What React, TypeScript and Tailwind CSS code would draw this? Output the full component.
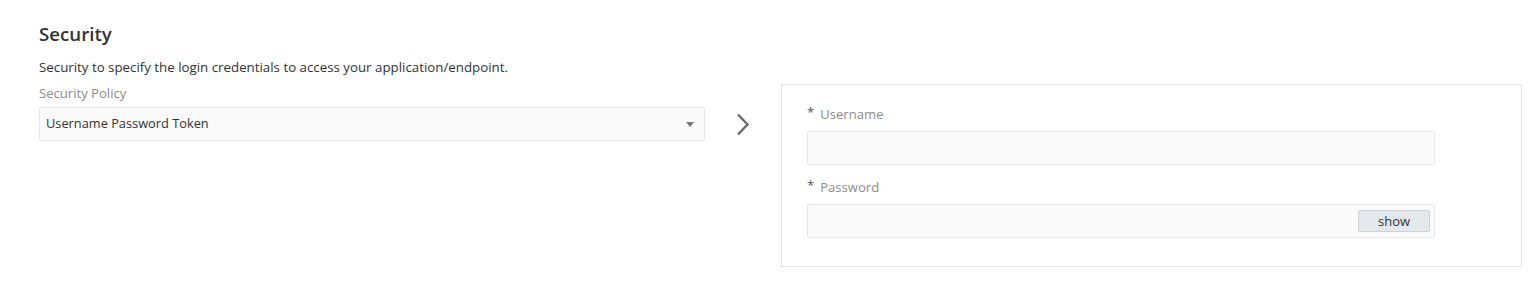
import React from "react";

export default function App() {
  return (
    <div
      className="w-[1536px] h-[281px] bg-white text-[#333333] overflow-hidden"
      style={{ fontFamily: '"Open Sans", "Noto Sans", Arial, sans-serif' }}
    >
      <div className="pl-[39px] pt-[22px]">
        <h2 className="text-[18.7px] leading-[24px] font-semibold text-[#333333]">Security</h2>
        <p className="mt-[12px] text-[13.3px] leading-[18px] text-[#333333]">
          Security to specify the login credentials to access your application/endpoint.
        </p>
        <div className="mt-[8px] flex items-start">
          <div className="w-[666px]">
            <div className="text-[13.1px] leading-[18px] text-[#8c8c8c]">Security Policy</div>
            <div className="mt-[5px] h-[34px] flex items-center justify-between bg-[#fafafa] border border-[#e6e6e6] rounded-[2px] pl-[6px] pr-[10px]">
              <span className="text-[12.8px] text-[#333333]">Username Password Token</span>
              <svg width="8" height="5" viewBox="0 0 8 5">
                <path d="M0 0 L8 0 L4 5 Z" fill="#777777" />
              </svg>
            </div>
          </div>
          <div className="w-[76px] flex justify-center pt-[29px]">
            <svg width="14" height="23" viewBox="0 0 14 23">
              <path d="M2 1.5 L11.5 11.5 L2 21.5" fill="none" stroke="#6b6b6b" strokeWidth="2.4" />
            </svg>
          </div>
          <div className="w-[741px] h-[183px] border border-[#e3e3e3] pl-[25px] pt-[20px]">
            <div className="text-[13.1px] leading-[18px] text-[#8c8c8c] flex items-start">
              <span className="text-[#555555] mr-[6px] leading-[14px]">*</span>
              <span>Username</span>
            </div>
            <div className="mt-[8px] w-[628px] h-[34px] bg-[#fafafa] border border-[#e8e8e8] rounded-[2px]" />
            <div className="mt-[13px] text-[13.1px] leading-[18px] text-[#8c8c8c] flex items-start">
              <span className="text-[#555555] mr-[6px] leading-[14px]">*</span>
              <span>Password</span>
            </div>
            <div className="mt-[8px] w-[628px] h-[34px] bg-[#fafafa] border border-[#e8e8e8] rounded-[2px] flex items-center justify-end pr-[4px]">
              <button className="w-[72px] h-[22px] bg-[#e4e8ec] border border-[#cdd2d7] rounded-[2px] text-[13px] leading-[18px] text-[#333333]">
                show
              </button>
            </div>
          </div>
        </div>
      </div>
    </div>
  );
}
